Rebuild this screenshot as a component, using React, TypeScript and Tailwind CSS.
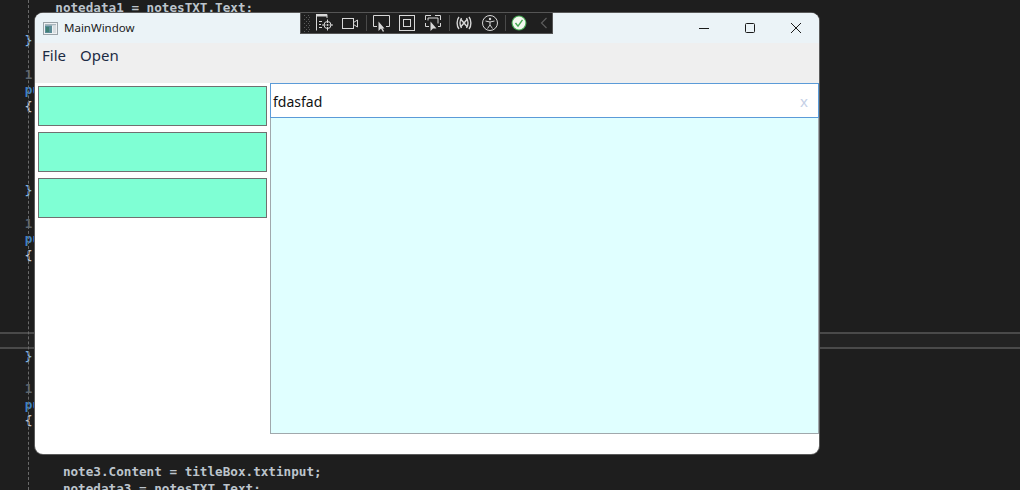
type CodeLine = { text?: string; color?: string; size?: string };

const line = "h-[16.6px] leading-[16.6px]";
const blank: CodeLine = {};

const topCode: CodeLine[] = [
  { text: "       notedata1 = notesTXT.Text;", color: "text-[#bcc4cc]" },
  blank,
  { text: "   }", color: "text-[#7fb2dc]" },
  blank,
  { text: "   1", color: "text-[#5a6570]", size: "h-[15.6px] pt-[2px] leading-[13.6px]" },
  { text: "   public", color: "text-[#3f82c4]" },
  { text: "   {", color: "text-[#bcc4cc]" },
  blank,
  blank,
  blank,
  { size: "h-[18px]" },
  { text: "   }", color: "text-[#7fb2dc]" },
  blank,
  { text: "   1", color: "text-[#5a6570]", size: "h-[15px] pt-[1px] leading-[14px]" },
  { text: "   public", color: "text-[#3f82c4]" },
  { text: "   {", color: "text-[#bcc4cc]" },
];

const bottomCode: CodeLine[] = [
  { text: "   }", color: "text-[#7fb2dc]" },
  blank,
  { text: "   1", color: "text-[#5a6570]", size: "h-[14.4px] leading-[14.4px]" },
  { text: "   public", color: "text-[#3f82c4]" },
  { text: "   {", color: "text-[#bcc4cc]" },
  blank,
  { size: "h-[18px]" },
  { text: "        note3.Content = titleBox.txtinput;", color: "text-[#bcc4cc]" },
  { text: "        notedata3 = notesTXT.Text;", color: "text-[#bcc4cc]" },
];

function CodeLines({ lines }: { lines: CodeLine[] }) {
  return (
    <div className="pl-[2px]">
      {lines.map((l, i) => (
        <div key={i} className={`whitespace-pre ${l.size ?? line} ${l.color ?? ""}`}>
          {l.text}
        </div>
      ))}
    </div>
  );
}

function Separator() {
  return <div className="h-4 w-px bg-[#4a4a4a]" />;
}

function Toolbar() {
  return (
    <div className="absolute left-[300px] top-[12px] z-10 flex h-[22px] w-[253px] items-center border border-[#555555] bg-[#1f1f1f]">
      <svg width="6" height="17" className="ml-[3px] shrink-0" viewBox="0 0 6 17" fill="#5c5c5c">
        {[0, 2, 4, 6, 8, 10, 12, 14, 16].map((y) => (
          <g key={y}>
            <rect x={y % 4 === 0 ? 0 : 2} y={y} width="1" height="1" />
            <rect x={y % 4 === 0 ? 4 : 5} y={y} width="1" height="1" />
          </g>
        ))}
      </svg>
      {/* live visual tree */}
      <svg width="17" height="18" className="ml-[6px] shrink-0" viewBox="0 0 17 18" fill="none" stroke="#d8d8d8">
        <path d="M0.500 16.500V0.500H11V4" />
        <rect x="0" y="0" width="11" height="2.500" fill="#d8d8d8" stroke="none" />
        <path d="M3 7.500h3M3 10.500h2M3 13.500h3" />
        <circle cx="11.500" cy="11" r="3.500" />
        <path d="M11.500 5.500v3.500M11.500 13v3.500M6 11h3.500M13.500 11h3.500" />
        <circle cx="11.500" cy="11" r="1" fill="#d8d8d8" stroke="none" />
      </svg>
      {/* record */}
      <svg width="17" height="11" className="ml-[9px] shrink-0" viewBox="0 0 17 11" fill="none" stroke="#d8d8d8">
        <rect x="0.500" y="0.500" width="11" height="10" />
        <path d="M11.500 4.500l4-2.500v7l-4-2.500" />
      </svg>
      <div className="ml-[7px]"><Separator /></div>
      {/* select element */}
      <svg width="17" height="17" className="ml-[6px] shrink-0" viewBox="0 0 17 17" fill="none" stroke="#d8d8d8">
        <path d="M4 11.500H0.500V0.500H16.500V11.500H13" />
        <path d="M5.500 6.500l0 9.500 2.500-2.500 3.500 0z" fill="#d8d8d8" stroke="none" />
        <path d="M8.500 13l2 3.500" strokeWidth="1.500" />
      </svg>
      {/* adorner */}
      <svg width="17" height="17" className="ml-[9px] shrink-0" viewBox="0 0 17 17" fill="none" stroke="#d8d8d8">
        <rect x="0.500" y="0.500" width="15" height="15" />
        <rect x="4.500" y="4.500" width="7" height="7" />
      </svg>
      {/* track focus */}
      <svg width="17" height="17" className="ml-[9px] shrink-0" viewBox="0 0 17 17" fill="none" stroke="#d8d8d8">
        <path d="M0.500 5V0.500H6M10 0.500H15.500V5M0.500 8V11.500H4M15.500 8V11.500H13" />
        <path d="M3 5.500V3H13V8.500" />
        <path d="M5.500 6.500l0 9.500 2.500-2.500 3.500 0z" fill="#d8d8d8" stroke="none" />
      </svg>
      <div className="ml-[7px]"><Separator /></div>
      {/* binding failures */}
      <svg width="16" height="14" className="ml-[6px] shrink-0" viewBox="0 0 16 14" fill="none" stroke="#d8d8d8" strokeWidth="1.400">
        <path d="M3 1C0.500 4 0.500 10 3 13M5.500 2C3.700 5 3.700 9 5.500 12" />
        <path d="M13 1c2.500 3 2.500 9 0 12M10.500 2c1.800 3 1.800 7 0 10" />
        <path d="M5 10.500l6-7M5 3.500l6 7" strokeWidth="1.500" />
      </svg>
      {/* accessibility */}
      <svg width="16" height="16" className="ml-[10px] shrink-0" viewBox="0 0 16 16" fill="none" stroke="#d8d8d8">
        <circle cx="8" cy="8" r="7.500" />
        <circle cx="8" cy="4" r="1.200" fill="#d8d8d8" stroke="none" />
        <path d="M3.500 6L8 7l4.500-1M8 7v3M8 10l-2.500 3.500M8 10l2.500 3.500" />
      </svg>
      <div className="ml-[7px]"><Separator /></div>
      {/* no issues */}
      <svg width="16" height="16" className="ml-[5px] shrink-0" viewBox="0 0 16 16">
        <circle cx="8" cy="8" r="7.500" fill="#45a852" />
        <circle cx="8" cy="8" r="6.400" fill="#f3f8ef" />
        <path d="M4.500 8l2.500 3.200 4.500-6.400" fill="none" stroke="#45a852" strokeWidth="1.400" />
      </svg>
      {/* collapse */}
      <svg width="8" height="12" className="ml-[13px] shrink-0" viewBox="0 0 8 12" fill="none" stroke="#5c5c5c" strokeWidth="1.200">
        <path d="M6.500 1L1.500 6l5 5" />
      </svg>
    </div>
  );
}

function AppIcon() {
  return (
    <svg width="15" height="13" viewBox="0 0 15 13" className="shrink-0">
      <rect x="0.500" y="0.500" width="14" height="12" fill="#eef1f3" stroke="#9aa3a8" />
      <rect x="2" y="2" width="11" height="1.500" fill="#a9b6bd" />
      <rect x="2" y="3.500" width="7" height="7.500" fill="#5b8c97" />
      <rect x="3" y="5" width="3" height="5" fill="#3f7f74" />
      <rect x="10" y="3.500" width="3" height="7.500" fill="#d7dde0" />
    </svg>
  );
}

function CaptionButtons() {
  return (
    <div className="ml-auto flex items-center gap-[36px] pr-[18px]">
      <svg width="10" height="10" viewBox="0 0 10 10" stroke="#1a1a1a" fill="none">
        <path d="M0 5.500H10" />
      </svg>
      <svg width="10" height="10" viewBox="0 0 10 10" stroke="#1a1a1a" fill="none">
        <rect x="0.500" y="0.500" width="9" height="9" rx="1" />
      </svg>
      <svg width="10" height="10" viewBox="0 0 10 10" stroke="#1a1a1a" fill="none">
        <path d="M0 0L10 10M10 0L0 10" />
      </svg>
    </div>
  );
}

function NoteButton() {
  return <div className="h-10 w-[229px] border border-[#707070] bg-[#7fffd4]" />;
}

export default function App() {
  return (
    <div className="relative h-[490px] w-[1020px] overflow-hidden bg-[#1e1e1e] font-['DejaVu_Sans_Mono',monospace] text-[12.65px] font-semibold">
      <div className="h-[332px] overflow-hidden">
        <CodeLines lines={topCode} />
      </div>
      <div className="h-[2px] bg-[#4a4a4a]" />
      <div className="h-[13px] bg-[#232323]" />
      <div className="h-[2px] bg-[#4a4a4a]" />
      <CodeLines lines={bottomCode} />

      {/* gutter guide */}
      <div className="absolute bottom-0 left-[28px] top-0 border-l border-dashed border-[#6a6a6a]" />

      <Toolbar />

      {/* WPF window */}
      <div className="absolute left-[35px] top-[13px] flex h-[441px] w-[784px] flex-col overflow-hidden rounded-lg bg-white font-['Noto_Sans',sans-serif] font-normal shadow-[0_0_0_1px_#5a5a5a]">
        <div className="flex h-[30px] shrink-0 items-center bg-[#ebf3f7] pl-[8px]">
          <AppIcon />
          <span className="ml-[6px] text-[11.5px] text-[#1a1a1a]">MainWindow</span>
          <CaptionButtons />
        </div>
        <div className="flex h-10 shrink-0 gap-[14px] bg-[#efefef] pl-[7px] text-[15px] leading-6 text-[#1c2b44]">
          <span>File</span>
          <span>Open</span>
        </div>
        <div className="flex min-h-0 flex-1 pb-5">
          <div className="flex w-[235px] shrink-0 flex-col gap-[6px] pl-[3px] pt-[3px]">
            <NoteButton />
            <NoteButton />
            <NoteButton />
          </div>
          <div className="flex min-w-0 flex-1 flex-col">
            <div className="flex h-[35px] shrink-0 items-center justify-between border border-[#5b9bd8] bg-white pl-[2px] pr-[10px] pt-[2px] text-[14px] text-[#111111]">
              <span>fdasfad</span>
              <span className="text-[15px] text-[#c5d0e6]">x</span>
            </div>
            <div className="flex-1 border border-t-0 border-[#a0a8ac] bg-[#e0ffff]" />
          </div>
        </div>
      </div>
    </div>
  );
}
